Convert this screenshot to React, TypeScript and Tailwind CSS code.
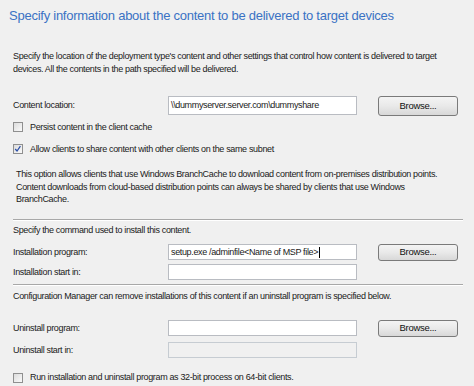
import React from "react";

function Checkbox({ checked = false }: { checked?: boolean }) {
  return (
    <span className="relative inline-block h-[10px] w-[10px] shrink-0 border border-[#8f8f8f] bg-gradient-to-br from-[#dcdcdc] to-[#fafafa]">
      {checked && (
        <svg viewBox="0 0 10 10" className="absolute left-0 top-0 h-[8px] w-[8px]">
          <path d="M1.5 5 L3.8 7.5 L8 1.5" fill="none" stroke="#2b4fa8" strokeWidth="1.6" />
        </svg>
      )}
    </span>
  );
}

function BrowseButton({ tall }: { tall?: boolean }) {
  return (
    <button
      className={
        "ml-[21px] w-[80px] rounded-[3px] border border-[#7a7a7a] bg-gradient-to-b from-[#f4f4f4] via-[#e9e9e9] to-[#d8d8d8] text-[9.5px] leading-none tracking-[-0.3px] text-[#111] " +
        (tall ? "h-[20px]" : "h-[17px]")
      }
    >
      Browse...
    </button>
  );
}

function Field({ label, value, disabled, browse, caret }: { label: string; value?: string; disabled?: boolean; browse?: boolean; caret?: boolean }) {
  return (
    <div className="flex h-[17px] items-center pl-[13px]">
      <div className="w-[155px]">{label}</div>
      <div
        className={
          "flex h-[16px] w-[189px] items-center border px-[2px] " +
          (disabled ? "border-[#c6ccd2] bg-[#f0f0f0]" : "border-[#b9bcc2] bg-white")
        }
      >
        {value}
        {caret && <span className="ml-px inline-block h-[11px] w-px bg-black" />}
      </div>
      {browse && <BrowseButton />}
    </div>
  );
}

function Separator() {
  return (
    <div className="mx-[13px] w-[450px]">
      <div className="h-px bg-[#a8a8a8]" />
      <div className="h-px bg-white" />
    </div>
  );
}

export default function App() {
  return (
    <div className="h-[386px] w-[474px] overflow-hidden whitespace-nowrap bg-[#f0f0f0] font-['Liberation_Sans',Arial,sans-serif] text-[9px] leading-[13px] tracking-[-0.35px] text-[#1a1a1a]">
      <div className="ml-[9px] mt-[6px] h-[20px] text-[13px] leading-[20px] tracking-[-0.25px] text-[#3a72c4]">
        Specify information about the content to be delivered to target devices
      </div>

      <p className="ml-[13px] mt-[24px]">
        Specify the location of the deployment type's content and other settings that control how content is delivered to target
        <br />
        devices. All the contents in the path specified will be delivered.
      </p>

      <div className="mt-[19px] flex h-[21px] items-center pl-[13px]">
        <div className="w-[155px]">Content location:</div>
        <div className="flex h-[19px] w-[189px] items-center border border-[#b9bcc2] bg-white px-[2px]">
          \\dummyserver.server.com\dummyshare
        </div>
        <BrowseButton tall />
      </div>

      <div className="mt-[4px] flex h-[14px] items-center gap-[7px] pl-[13px]">
        <Checkbox />
        <span>Persist content in the client cache</span>
      </div>

      <div className="mt-[8px] flex h-[14px] items-center gap-[7px] pl-[13px]">
        <Checkbox checked />
        <span>Allow clients to share content with other clients on the same subnet</span>
      </div>

      <p className="ml-[16px] mt-[12px] leading-[12.5px]">
        This option allows clients that use Windows BranchCache to download content from on-premises distribution points.
        <br />
        Content downloads from cloud-based distribution points can always be shared by clients that use Windows
        <br />
        BranchCache.
      </p>

      <div className="mt-[13px]">
        <Separator />
      </div>

      <div className="ml-[13px] mt-[3px] h-[12px] leading-[12px]">Specify the command used to install this content.</div>

      <div className="mt-[8px]">
        <Field label="Installation program:" value="setup.exe /adminfile<Name of MSP file>" browse caret />
      </div>
      <div className="mt-[3px]">
        <Field label="Installation start in:" />
      </div>

      <div className="mt-[3px]">
        <Separator />
      </div>

      <div className="ml-[13px] mt-[4px] h-[12px] leading-[12px]">
        Configuration Manager can remove installations of this content if an uninstall program is specified below.
      </div>

      <div className="mt-[18px]">
        <Field label="Uninstall program:" browse />
      </div>
      <div className="mt-[5px]">
        <Field label="Uninstall start in:" disabled />
      </div>

      <div className="mt-[13px] flex h-[12px] items-center gap-[7px] pl-[13px]">
        <Checkbox />
        <span>Run installation and uninstall program as 32-bit process on 64-bit clients.</span>
      </div>
    </div>
  );
}
